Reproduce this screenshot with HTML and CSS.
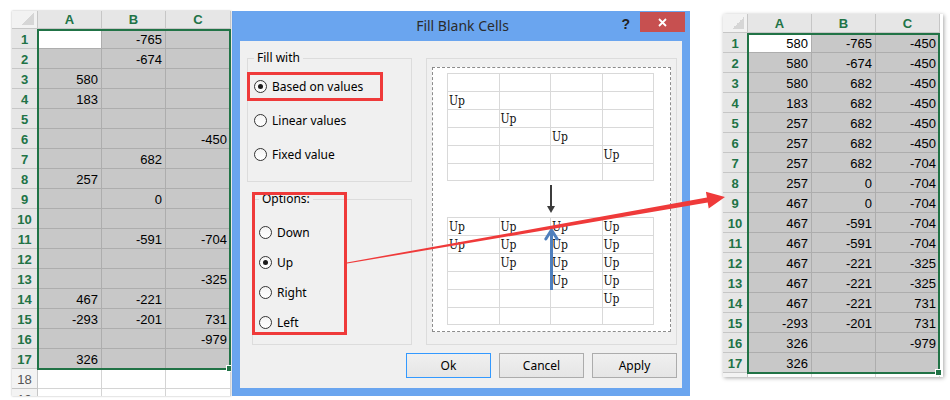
FILE: index.html
```html
<!DOCTYPE html>
<html>
<head>
<meta charset="utf-8">
<title>Fill Blank Cells</title>
<link rel="stylesheet" href="styles.css">
</head>
<body>
<div class="page">
  <div class="sheet sheet-left">
    <div class="corner"><i></i></div><div class="ch">A</div><div class="ch">B</div><div class="ch">C</div>
    <div class="rh">1</div><div class="cell a"></div><div class="cell g">-765</div><div class="cell g"></div>
    <div class="rh">2</div><div class="cell g"></div><div class="cell g">-674</div><div class="cell g"></div>
    <div class="rh">3</div><div class="cell g">580</div><div class="cell g"></div><div class="cell g"></div>
    <div class="rh">4</div><div class="cell g">183</div><div class="cell g"></div><div class="cell g"></div>
    <div class="rh">5</div><div class="cell g"></div><div class="cell g"></div><div class="cell g"></div>
    <div class="rh">6</div><div class="cell g"></div><div class="cell g"></div><div class="cell g">-450</div>
    <div class="rh">7</div><div class="cell g"></div><div class="cell g">682</div><div class="cell g"></div>
    <div class="rh">8</div><div class="cell g">257</div><div class="cell g"></div><div class="cell g"></div>
    <div class="rh">9</div><div class="cell g"></div><div class="cell g">0</div><div class="cell g"></div>
    <div class="rh">10</div><div class="cell g"></div><div class="cell g"></div><div class="cell g"></div>
    <div class="rh">11</div><div class="cell g"></div><div class="cell g">-591</div><div class="cell g">-704</div>
    <div class="rh">12</div><div class="cell g"></div><div class="cell g"></div><div class="cell g"></div>
    <div class="rh">13</div><div class="cell g"></div><div class="cell g"></div><div class="cell g">-325</div>
    <div class="rh">14</div><div class="cell g">467</div><div class="cell g">-221</div><div class="cell g"></div>
    <div class="rh">15</div><div class="cell g">-293</div><div class="cell g">-201</div><div class="cell g">731</div>
    <div class="rh">16</div><div class="cell g"></div><div class="cell g"></div><div class="cell g">-979</div>
    <div class="rh">17</div><div class="cell g">326</div><div class="cell g"></div><div class="cell g"></div>
    <div class="rh off">18</div><div class="cell"></div><div class="cell"></div><div class="cell"></div>
    <div class="rh off">19</div><div class="cell"></div><div class="cell"></div><div class="cell"></div>
    <div class="selection"><i class="handle"></i></div>
  </div>

  <div class="dialog">
    <div class="titlebar">
      <div class="title">Fill Blank Cells</div>
      <div class="controls">
        <span class="help">?</span>
        <span class="close"><svg width="9" height="9" viewBox="0 0 9 9"><path d="M1 1L8 8M8 1L1 8" stroke="#fff" stroke-width="1.8" fill="none"/></svg></span>
      </div>
    </div>
    <div class="dlg-body">
      <div class="main">
        <div class="leftcol">
          <fieldset class="grp fill">
            <legend>Fill with</legend>
            <div class="radio-row"><span class="radio on"></span>Based on values</div>
            <div class="radio-row"><span class="radio"></span>Linear values</div>
            <div class="radio-row"><span class="radio"></span>Fixed value</div>
          </fieldset>
          <fieldset class="grp opts">
            <legend>Options:</legend>
            <div class="radio-row"><span class="radio"></span>Down</div>
            <div class="radio-row"><span class="radio on"></span>Up</div>
            <div class="radio-row"><span class="radio"></span>Right</div>
            <div class="radio-row"><span class="radio"></span>Left</div>
          </fieldset>
        </div>
        <div class="preview">
          <div class="canvas">
            <div class="pgrid">
              <span></span><span></span><span></span><span></span>
              <span>Up</span><span></span><span></span><span></span>
              <span></span><span>Up</span><span></span><span></span>
              <span></span><span></span><span>Up</span><span></span>
              <span></span><span></span><span></span><span>Up</span>
              <span></span><span></span><span></span><span></span>
            </div>
            <div class="down">
              <svg width="10" height="28" viewBox="0 0 10 28"><path d="M5 0V22" stroke="#3c3c3c" stroke-width="2"/><path d="M1 21H9L5 28Z" fill="#3c3c3c"/></svg>
            </div>
            <div class="pgrid result">
              <span>Up</span><span>Up</span><span>Up</span><span>Up</span>
              <span>Up</span><span>Up</span><span>Up</span><span>Up</span>
              <span></span><span>Up</span><span>Up</span><span>Up</span>
              <span></span><span></span><span>Up</span><span>Up</span>
              <span></span><span></span><span></span><span>Up</span>
              <span></span><span></span><span></span><span></span>
              <svg class="uparrow" width="15" height="66" viewBox="0 0 15 66"><path d="M7.5 5V64" stroke="#4f7fbd" stroke-width="3"/><path d="M1.8 13L7.5 4L13.2 13" stroke="#4f7fbd" stroke-width="3" fill="none" stroke-linecap="round" stroke-linejoin="round"/></svg>
            </div>
          </div>
        </div>
      </div>
      <div class="btns">
        <button class="btn default">Ok</button>
        <button class="btn">Cancel</button>
        <button class="btn">Apply</button>
      </div>
    </div>
  </div>

  <div class="sheet sheet-right">
    <div class="corner"><i></i></div><div class="ch">A</div><div class="ch">B</div><div class="ch">C</div>
    <div class="rh">1</div><div class="cell a">580</div><div class="cell g">-765</div><div class="cell g">-450</div>
    <div class="rh">2</div><div class="cell g">580</div><div class="cell g">-674</div><div class="cell g">-450</div>
    <div class="rh">3</div><div class="cell g">580</div><div class="cell g">682</div><div class="cell g">-450</div>
    <div class="rh">4</div><div class="cell g">183</div><div class="cell g">682</div><div class="cell g">-450</div>
    <div class="rh">5</div><div class="cell g">257</div><div class="cell g">682</div><div class="cell g">-450</div>
    <div class="rh">6</div><div class="cell g">257</div><div class="cell g">682</div><div class="cell g">-450</div>
    <div class="rh">7</div><div class="cell g">257</div><div class="cell g">682</div><div class="cell g">-704</div>
    <div class="rh">8</div><div class="cell g">257</div><div class="cell g">0</div><div class="cell g">-704</div>
    <div class="rh">9</div><div class="cell g">467</div><div class="cell g">0</div><div class="cell g">-704</div>
    <div class="rh">10</div><div class="cell g">467</div><div class="cell g">-591</div><div class="cell g">-704</div>
    <div class="rh">11</div><div class="cell g">467</div><div class="cell g">-591</div><div class="cell g">-704</div>
    <div class="rh">12</div><div class="cell g">467</div><div class="cell g">-221</div><div class="cell g">-325</div>
    <div class="rh">13</div><div class="cell g">467</div><div class="cell g">-221</div><div class="cell g">-325</div>
    <div class="rh">14</div><div class="cell g">467</div><div class="cell g">-221</div><div class="cell g">731</div>
    <div class="rh">15</div><div class="cell g">-293</div><div class="cell g">-201</div><div class="cell g">731</div>
    <div class="rh">16</div><div class="cell g">326</div><div class="cell g"></div><div class="cell g">-979</div>
    <div class="rh">17</div><div class="cell g">326</div><div class="cell g"></div><div class="cell g"></div>
    <div class="rh off"></div><div class="cell"></div><div class="cell"></div><div class="cell"></div>
    <div class="selection"><i class="handle"></i></div>
  </div>

  <svg class="annot" width="950" height="400" viewBox="0 0 950 400">
    <rect x="248.5" y="73.5" width="133" height="26" fill="none" stroke="#ef3a3a" stroke-width="3"/>
    <rect x="253.5" y="193.5" width="92" height="140" fill="none" stroke="#ef3a3a" stroke-width="3"/>
    <polygon points="347.1,263.6 707.7,202.6 708.7,208.4 725,197 705.9,191.8 706.9,197.6 346.9,262.4" fill="#ef3a3a"/>
  </svg>
</div>
</body>
</html>
```
FILE: styles.css
```css
* { box-sizing: border-box; }
html, body { margin: 0; background: #fff; }

.page {
  position: relative;
  width: 950px;
  height: 400px;
  overflow: hidden;
  display: flex;
  align-items: flex-start;
  font-family: "Liberation Sans", Arial, sans-serif;
}

/* ---------- spreadsheets ---------- */
.sheet {
  position: relative;
  display: grid;
  overflow: hidden;
  background: #fff;
  font-size: 13px;
  color: #000;
}
.sheet-left {
  margin: 11px 0 0 12px;
  width: 219px;
  height: 385px;
  grid-template-columns: 26px 64px 64px 65px;
  grid-template-rows: 18px repeat(19, 20px);
  box-shadow: 0 0 2px rgba(0,0,0,.3);
}
.sheet-right {
  margin: 14px 0 0 33px;
  width: 220px;
  height: 363px;
  grid-template-columns: 25px 64px 64px 64px;
  grid-template-rows: 19px repeat(18, 20px);
  box-shadow: 1px 1px 4px rgba(0,0,0,.35);
}
.corner, .ch, .rh {
  background: #e6e6e6;
  border-right: 1px solid #c6c6c6;
  border-bottom: 1px solid #c6c6c6;
  color: #217346;
  font-weight: bold;
  display: flex;
  align-items: center;
  justify-content: center;
}
.corner {
  background: #f2f2f2;
  align-items: flex-end;
  justify-content: flex-end;
  padding: 0 3px 3px 0;
}
.corner i {
  width: 12px;
  height: 12px;
  background: linear-gradient(135deg, transparent 50%, #d6d6d6 50%);
}
.rh { padding-top: 2px; }
.rh.off {
  background: #f3f3f3;
  color: #555;
  font-weight: normal;
}
.cell {
  border-right: 1px solid #d4d4d4;
  border-bottom: 1px solid #d4d4d4;
  text-align: right;
  padding: 3px 3px 0 0;
  line-height: 16px;
  white-space: nowrap;
}
.cell.g { background: #c8c8c8; border-color: #adadad; }
.cell.a { background: #fff; border-right-color: #adadad; border-bottom-color: #adadad; }
.selection {
  position: absolute;
  grid-column: 2 / 5;
  grid-row: 2 / 19;
  top: 0;
  left: -1px;
  right: 0;
  bottom: -1px;
  border: 2px solid #217346;
  pointer-events: none;
}
.handle {
  position: absolute;
  right: -4px;
  bottom: -4px;
  width: 7px;
  height: 7px;
  background: #217346;
  border: 1px solid #fff;
}

/* ---------- dialog ---------- */
.dialog {
  margin: 11px 0 0 1px;
  width: 458px;
  height: 385px;
  background: #6aa5ef;
  padding: 0 8px 8px;
  display: flex;
  flex-direction: column;
  font-family: "Noto Sans", "Liberation Sans", sans-serif;
}
.titlebar {
  height: 30px;
  flex: none;
  display: grid;
  grid-template-columns: 1fr auto 1fr;
  align-items: start;
  margin-right: -3px;
}
.title {
  grid-column: 2;
  font-size: 14px;
  line-height: 30px;
  color: #2b2b2b;
}
.controls {
  grid-column: 3;
  justify-self: end;
  display: flex;
  align-items: flex-start;
}
.help {
  font-family: "Liberation Sans", sans-serif;
  font-weight: bold;
  font-size: 14px;
  line-height: 16px;
  margin-top: 5px;
  color: #222;
}
.close {
  width: 45px;
  height: 20px;
  margin: 1px 0 0 10px;
  background: #c75050;
  display: flex;
  align-items: center;
  justify-content: center;
}
.dlg-body {
  flex: 1;
  background: #f0f0f0;
  padding: 9px 5px 10px 7px;
  display: flex;
  flex-direction: column;
  font-size: 12px;
  color: #000;
}
.main {
  display: flex;
  gap: 14px;
}
.leftcol {
  width: 165px;
  display: flex;
  flex-direction: column;
}
.grp {
  margin: 0;
  min-width: 0;
  border: 1px solid #dcdcdc;
}
.grp legend {
  padding: 0 3px;
  line-height: 16px;
}
.fill { padding: 3px 0 10px 6px; }
.opts {
  margin: 9px 0 0 5px;
  width: 160px;
  padding: 10px 0 7px 6px;
}
.radio-row {
  display: flex;
  align-items: center;
  height: 34px;
}
.opts .radio-row { height: 30px; }
.radio {
  width: 13px;
  height: 13px;
  border: 1px solid #333;
  border-radius: 50%;
  background: linear-gradient(#f4f4f4, #fff);
  margin: 0 5px 0 0;
  display: flex;
  align-items: center;
  justify-content: center;
}
.radio.on::after {
  content: "";
  width: 5px;
  height: 5px;
  border-radius: 50%;
  background: #1a1a1a;
}
.preview {
  margin-top: 8px;
  width: 251px;
  height: 287px;
  border: 1px solid #dcdcdc;
  padding: 8px 5px 12px 5px;
  display: flex;
  flex-direction: column;
}
.canvas {
  flex: 1;
  border: 1px dashed #8c8c8c;
  background: #fff;
  padding: 5px 0 0 14px;
}
.pgrid {
  position: relative;
  width: 207px;
  height: 108px;
  display: grid;
  grid-template-columns: repeat(4, 1fr);
  grid-template-rows: repeat(6, 1fr);
  border-top: 1px solid #d9d9d9;
  border-left: 1px solid #d9d9d9;
}
.pgrid span {
  border-right: 1px solid #d9d9d9;
  border-bottom: 1px solid #d9d9d9;
  font-family: "DejaVu Serif Condensed", "DejaVu Serif", "Liberation Serif", serif;
  font-size: 12px;
  line-height: 15px;
  padding: 2px 0 0 1px;
  color: #111;
  white-space: nowrap;
}
.down {
  width: 207px;
  height: 36px;
  display: flex;
  justify-content: center;
  padding-top: 4px;
}
.uparrow {
  position: absolute;
  left: 96px;
  top: 8px;
}
.btns {
  display: flex;
  justify-content: flex-end;
  gap: 8px;
  margin-top: 8px;
}
.btn {
  width: 85px;
  height: 25px;
  border: 1px solid #acacac;
  background: linear-gradient(#f0f0f0, #e5e5e5);
  font-family: "Noto Sans", "Liberation Sans", sans-serif;
  font-size: 12px;
  color: #000;
  padding: 0;
  display: flex;
  align-items: center;
  justify-content: center;
}
.btn.default { border-color: #3399ff; }

/* ---------- annotation layer ---------- */
.annot {
  position: absolute;
  top: 0;
  left: 0;
  pointer-events: none;
}
```
